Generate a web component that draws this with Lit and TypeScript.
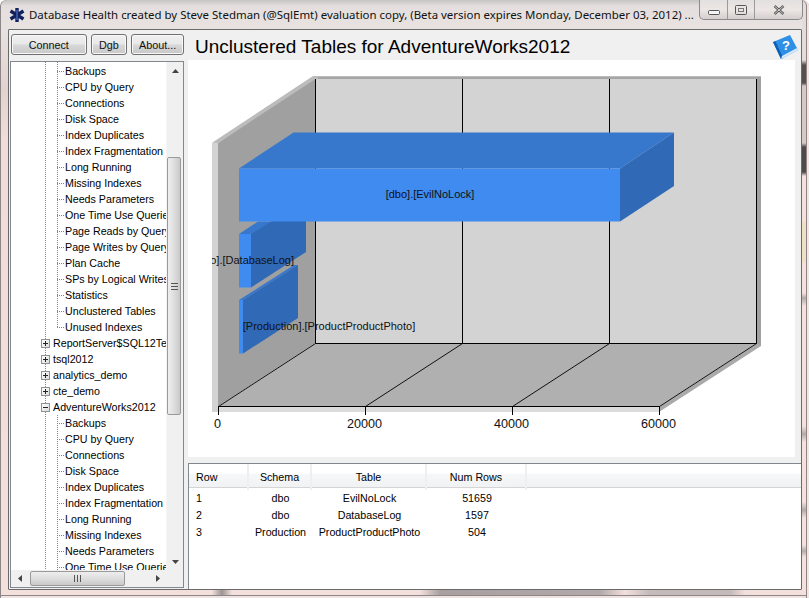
import { LitElement, html, css, svg } from 'lit';
import { customElement } from 'lit/decorators.js';

const REPORTS = [
  'Backups', 'CPU by Query', 'Connections', 'Disk Space', 'Index Duplicates',
  'Index Fragmentation', 'Long Running', 'Missing Indexes', 'Needs Parameters',
  'One Time Use Queries', 'Page Reads by Query', 'Page Writes by Query', 'Plan Cache',
  'SPs by Logical Writes', 'Statistics', 'Unclustered Tables', 'Unused Indexes',
];

const DATABASES = [
  { name: 'ReportServer$SQL12TempDB', open: false },
  { name: 'tsql2012', open: false },
  { name: 'analytics_demo', open: false },
  { name: 'cte_demo', open: false },
  { name: 'AdventureWorks2012', open: true },
];

const ROWS = [
  ['1', 'dbo', 'EvilNoLock', '51659'],
  ['2', 'dbo', 'DatabaseLog', '1597'],
  ['3', 'Production', 'ProductProductPhoto', '504'],
];

// the tree is cut off after "One Time Use Queries" in the second group
const SECOND_GROUP = REPORTS.slice(0, 10);

@customElement('app-root')
export class AppRoot extends LitElement {
  static styles = css`
    :host {
      display: block;
      width: 809px;
      height: 598px;
      overflow: hidden;
      font-family: 'Liberation Sans', Arial, sans-serif;
      font-size: 10.7px;
      color: #000;
    }
    .window {
      width: 809px;
      height: 598px;
      box-sizing: border-box;
      padding: 0 7px 8px 8px;
      display: flex;
      flex-direction: column;
      border-radius: 6px 6px 0 0;
      box-shadow: inset 1px 0 #8c8688, inset -2px 0 #f6e4e0, inset -3px 0 #8c8688, inset 0 -2px #f0e4e2, inset 0 -3px #8c8688;
      /* blurred glass showing through the frame */
      background:
        linear-gradient(
            #e4dcda 0, #e4dcda 60px, #57504e 65px, #57504e 83px, #d8c8c4 86px, #d8c8c4 143px, #4f4a4a 147px, #4f4a4a 172px,
            #f5e0dc 176px, #f5e0dc 220px, #eee0c0 224px, #eee0c0 260px, #f5e0dc 264px, #f5e0dc 293px,
            #b5a9a8 298px, #f5e0dc 306px, #f5e0dc 426px, #b5a9a8 434px, #f5e0dc 442px, #f5e0dc 502px,
            #b5a9a8 510px, #f5e0dc 518px, #f5e0dc 545px, #b5a9a8 551px, #f5e0dc 557px
          )
          right top / 7px 100% no-repeat,
        linear-gradient(
            90deg, #f3dfdc 0, #f3dfdc 212px, #9c9494 222px, #f3dfdc 232px, #f3dfdc 420px, #a8a0a0 440px,
            #b2aaaa 600px, #f3dfdc 625px, #c4baba 650px, #c4baba 730px, #f3dfdc 745px
          )
          left bottom / 100% 8px no-repeat,
        linear-gradient(#c8c3c3 0, #e4dfde 6px, #e8e2e0 29px, #e2d2ce 90px, #f0ddd9 140px, #f3dfdc 100%);
    }
    .titlebar {
      height: 29px;
      flex: none;
      display: flex;
      align-items: flex-start;
      margin-right: -1px;
    }
    .app-icon { margin: 8px 4px 0 1px; flex: none; }
    .caption {
      font-family: 'Noto Sans', sans-serif;
      font-size: 11.45px;
      line-height: 16px;
      margin-top: 7px;
      white-space: nowrap;
      color: #111;
      width: 665px;
      flex: none;
    }
    .controls {
      margin-left: 5px;
      display: flex;
      height: 19px;
      border: 1px solid #8a8a8a;
      border-top: none;
      border-radius: 0 0 5px 5px;
      background: linear-gradient(#e4e0e0, #ece6e4 50%, #d4cece);
      flex: none;
    }
    .controls div {
      display: flex;
      align-items: center;
      justify-content: center;
      border-left: 1px solid #9a9a9a;
    }
    .controls div:first-child { border-left: none; width: 27px; padding-top: 6px; box-sizing: border-box; }
    .controls .max { width: 26px; }
    .controls .close { width: 47px; }
    .client {
      flex: 1;
      min-height: 0;
      border: 1px solid #6a6a6a;
      background: #f0f0f0;
      display: flex;
      gap: 4px;
      padding: 0 0 0 1px;
      border-radius: 1px;
    }
    .left {
      width: 174px;
      flex: none;
      display: flex;
      flex-direction: column;
      padding-top: 4px;
      gap: 6px;
      padding-bottom: 1px;
      box-sizing: border-box;
    }
    .buttons { display: flex; gap: 4px; padding-left: 1px; }
    button {
      height: 21px;
      padding: 0;
      font: inherit;
      font-size: 10.8px;
      color: #111;
      border: 1px solid #707070;
      border-radius: 3px;
      background: linear-gradient(#f0f0f0 0, #e8e8e8 48%, #d8d8d8 52%, #c8c8c8 100%);
      box-shadow: inset 0 0 0 1px #f8f8f8;
    }
    .b1 { width: 76px; }
    .b2 { width: 37px; }
    .b3 { width: 53px; }
    .tree {
      flex: 1;
      min-height: 0;
      border: 1px solid #828790;
      background: #fff;
      display: grid;
      grid-template-columns: 1fr 17px;
      grid-template-rows: 1fr 17px;
    }
    .rows {
      overflow: hidden;
      padding-top: 1px;
      min-width: 0;
      position: relative;
    }
    .node {
      height: 16px;
      line-height: 16px;
      white-space: nowrap;
      display: flex;
      align-items: center;
    }
    .leaf { padding-left: 46px; }
    .leaf i {
      width: 7px;
      flex: none;
      height: 0;
      border-top: 1px dotted #888;
    }
    .leaf span { margin-left: 1px; }
    .db { padding-left: 30px; }
    .box {
      width: 9px;
      height: 9px;
      flex: none;
      margin-right: 3px;
      box-sizing: border-box;
      border: 1px solid #919191;
      background: linear-gradient(135deg, #fff, #dcdcdc);
      position: relative;
    }
    .box::before {
      content: '';
      position: absolute;
      left: 1px;
      right: 1px;
      top: 3px;
      height: 1px;
      background: #222;
    }
    .box.plus::after {
      content: '';
      position: absolute;
      top: 1px;
      bottom: 1px;
      left: 3px;
      width: 1px;
      background: #222;
    }
    .guides {
      position: absolute;
      left: 0;
      top: 0;
      pointer-events: none;
    }
    .vbar {
      display: flex;
      flex-direction: column;
      background: #f0f0f0;
      border-left: 1px solid #f4f4f4;
    }
    .hbar {
      display: flex;
      align-items: center;
      background: #f0f0f0;
    }
    .corner { background: #f0f0f0; }
    .arrow {
      flex: none;
      display: flex;
      align-items: center;
      justify-content: center;
      width: 17px;
      height: 17px;
    }
    .vthumb {
      height: 258px;
      width: 14px;
      margin: 78px 0 0 0;
      box-sizing: border-box;
      border: 1px solid #9a9a9a;
      border-radius: 2px;
      background: linear-gradient(90deg, #eee, #dedede 50%, #c9c9c9);
      display: flex;
      align-items: center;
      justify-content: center;
      flex: none;
    }
    .vspace { flex: 1; }
    .hthumb {
      width: 95px;
      height: 15px;
      box-sizing: border-box;
      border: 1px solid #9a9a9a;
      border-radius: 2px;
      background: linear-gradient(#eee, #dedede 50%, #c9c9c9);
      display: flex;
      align-items: center;
      justify-content: center;
      margin-left: 2px;
      flex: none;
    }
    .hspace { flex: 1; }
    .right {
      flex: 1;
      min-width: 0;
      display: flex;
      flex-direction: column;
    }
    .head {
      height: 30px;
      flex: none;
      display: flex;
      align-items: center;
      justify-content: space-between;
      padding: 0 0 0 7px;
    }
    h1 {
      margin: 4px 0 0;
      font-size: 19px;
      font-weight: 400;
      white-space: nowrap;
    }
    .help { margin: 3px 2px 0 0; flex: none; }
    .chart {
      height: 397px;
      flex: none;
      margin-right: 6px;
      background: #fff;
      display: block;
    }
    .grid {
      margin-top: 6px;
      flex: 1;
      min-height: 0;
      background: #fff;
      border-top: 1px solid #828790;
      border-left: 1px solid #828790;
    }
    .cols {
      display: grid;
      grid-template-columns: 60px 63px 115px 100px 1fr;
      align-items: stretch;
    }
    .cols.hdr {
      height: 23px;
      line-height: 26px;
      background: linear-gradient(#fff 0, #fff 40%, #f6f7f9 45%, #f1f2f4 100%);
      border-bottom: 1px solid #d5d5d5;
      margin-bottom: 2px;
    }
    .cols.hdr div { border-right: 2px solid #eeeff1; text-align: center; }
    .cols.hdr div:last-child { border-right: none; }
    .cols.row { height: 17px; line-height: 17px; }
    .cols div { text-align: center; white-space: nowrap; }
    .cols div:first-child { text-align: left; padding-left: 7px; }
  `;

  private guides() {
    // dotted vertical tree guides, drawn over the row list
    return html`<svg class="guides" width="60" height="510">
      <line x1="34.5" y1="0" x2="34.5" y2="510" stroke="#888" stroke-dasharray="1 1"></line>
      <line x1="46.5" y1="0" x2="46.5" y2="265" stroke="#888" stroke-dasharray="1 1"></line>
      <line x1="46.5" y1="353" x2="46.5" y2="510" stroke="#888" stroke-dasharray="1 1"></line>
    </svg>`;
  }

  private tree() {
    return html`
      <div class="tree">
        <div class="rows">
          ${this.guides()}
          ${REPORTS.map((r) => html`<div class="node leaf"><i></i><span>${r}</span></div>`)}
          ${DATABASES.map(
            (d) => html`<div class="node db">
              <span class="box ${d.open ? '' : 'plus'}"></span><span>${d.name}</span>
            </div>`
          )}
          ${SECOND_GROUP.map((r) => html`<div class="node leaf"><i></i><span>${r}</span></div>`)}
        </div>
        <div class="vbar">
          <div class="arrow"><svg width="7" height="4"><path d="M3.5 0 7 4H0z" fill="#444"></path></svg></div>
          <div class="vthumb">
            <svg width="7" height="7"><path d="M0 .5h7M0 3.5h7M0 6.5h7" stroke="#555" fill="none"></path></svg>
          </div>
          <div class="vspace"></div>
          <div class="arrow"><svg width="7" height="4"><path d="M0 0h7L3.5 4z" fill="#444"></path></svg></div>
        </div>
        <div class="hbar">
          <div class="arrow"><svg width="4" height="7"><path d="M4 0v7L0 3.5z" fill="#444"></path></svg></div>
          <div class="hthumb">
            <svg width="7" height="7"><path d="M.5 0v7M3.5 0v7M6.5 0v7" stroke="#555" fill="none"></path></svg>
          </div>
          <div class="hspace"></div>
          <div class="arrow"><svg width="4" height="7"><path d="M0 0v7l4-3.5z" fill="#444"></path></svg></div>
        </div>
        <div class="corner"></div>
      </div>
    `;
  }

  // Chart coordinates are page coordinates minus the panel origin (188, 60)
  private chart() {
    const axis = [
      { x: 30.5, label: '0' },
      { x: 177.5, label: '20000' },
      { x: 324.5, label: '40000' },
      { x: 471.5, label: '60000' },
    ];
    const wall = [127.5, 274.5, 421.5, 568.5];
    const text = 'font-family:"Liberation Sans",Arial,sans-serif';
    return html`<svg class="chart" width="607" height="397" viewBox="0 0 607 397" shape-rendering="crispEdges">
      ${svg`
      <defs><clipPath id="plot"><rect x="24" y="0" width="560" height="397"></rect></clipPath></defs>
      <polygon points="24,82.7 125,16 573,16 573,19 130,19 30,83" fill="#bcbcbc" shape-rendering="auto"></polygon>
      <rect x="130" y="16" width="443" height="3" fill="#a6a6a6"></rect>
      <rect x="125" y="16" width="448" height="1" fill="#bcbcbc"></rect>
      <rect x="569" y="17" width="4" height="269" fill="#a0a0a0"></rect>
      <polygon points="24,352 471,352 573,286 569,283 471,347 30,347" fill="#aaa" shape-rendering="auto"></polygon>
      <rect x="24" y="347" width="447" height="5" fill="#dcdcdc"></rect>
      <rect x="24" y="82.7" width="6" height="269" fill="#d3d3d3"></rect>
      <polygon points="30,346.5 127.5,283 127.5,19 30,83" fill="#a0a0a0" shape-rendering="auto"></polygon>
      <rect x="127.5" y="19" width="441" height="264" fill="#d3d3d3"></rect>
      <polygon points="30.5,346.5 127.5,283 568.5,283 471.5,346.5" fill="#b0b0b0" shape-rendering="auto"></polygon>
      ${wall.map((x) => svg`<line x1=${x} y1="19" x2=${x} y2="283" stroke="#000"></line>`)}
      <line x1="127" y1="283.5" x2="569" y2="283.5" stroke="#000"></line>
      <line x1="30" y1="346.5" x2="472" y2="346.5" stroke="#000"></line>
      ${wall.map(
        (x, i) => svg`<line x1=${axis[i].x} y1="346.5" x2=${x} y2="283.5" stroke="#111" shape-rendering="auto"></line>`
      )}
      ${axis.map(
        (a) => svg`<line x1=${a.x} y1="346" x2=${a.x} y2="355" stroke="#000"></line>
          <text x=${a.x - 1} y="368" text-anchor="middle" font-size="12.6" style=${text} fill="#111">${a.label}</text>`
      )}
      <g shape-rendering="auto">
        <polygon points="51,240 106,205 110,205 55,240" fill="#3878cc"></polygon>
        <polygon points="55,240 110,205 110,258 55,293.5" fill="#3069b6"></polygon>
        <rect x="51" y="240" width="4" height="53.5" fill="#3f8bf0"></rect>
        <polygon points="51,174 70,161.5 118,161.5 63,174" fill="#3878cc"></polygon>
        <polygon points="63,174 118,140 118,192 63,227.5" fill="#3069b6"></polygon>
        <rect x="51" y="174" width="12" height="53.5" fill="#3f8bf0"></rect>
        <polygon points="51,108.5 105.5,72.5 486,72.5 432,108.5" fill="#3878cc"></polygon>
        <polygon points="432,108.5 486,72.5 486,126 432,161.5" fill="#3069b6"></polygon>
        <rect x="51" y="108.5" width="381" height="53" fill="#3f8bf0"></rect>
      </g>
      <g clip-path="url(#plot)" font-size="11" style=${text} fill="#111">
        <text x="242" y="138" text-anchor="middle">[dbo].[EvilNoLock]</text>
        <text x="56.500" y="204" text-anchor="middle">[dbo].[DatabaseLog]</text>
        <text x="141" y="270" text-anchor="middle">[Production].[ProductProductPhoto]</text>
      </g>
      `}
    </svg>`;
  }

  render() {
    return html`
      <div class="window">
        <div class="titlebar">
          <svg class="app-icon" width="16" height="14" viewBox="0 0 16 14">
            <path d="M8 0v14M1.5 3l13 8M14.5 3l-13 8" stroke="#12205e" stroke-width="3.4" fill="none"></path>
            <path d="M8 2v10" stroke="#4a78c8" stroke-width="1.2" fill="none"></path>
          </svg>
          <div class="caption">Database Health created by Steve Stedman (@SqlEmt) evaluation copy, (Beta version expires Monday, December 03, 2012) ...</div>
          <div class="controls">
            <div><svg width="12" height="5"><rect x=".5" y=".5" width="11" height="4" rx="1" fill="#f4f4f4" stroke="#555"></rect></svg></div>
            <div class="max"><svg width="12" height="10"><rect x=".5" y=".5" width="11" height="9" rx="1" fill="none" stroke="#555"></rect><rect x="3.5" y="3.5" width="5" height="3" fill="none" stroke="#777"></rect></svg></div>
            <div class="close"><svg width="12" height="10"><path d="M1.5 1l9 8M10.5 1l-9 8" stroke="#555" stroke-width="2.4" fill="none"></path><path d="M1.5 1l9 8M10.5 1l-9 8" stroke="#eee" stroke-width=".8" fill="none"></path></svg></div>
          </div>
        </div>
        <div class="client">
          <div class="left">
            <div class="buttons">
              <button class="b1">Connect</button>
              <button class="b2">Dgb</button>
              <button class="b3">About...</button>
            </div>
            ${this.tree()}
          </div>
          <div class="right">
            <div class="head">
              <h1>Unclustered Tables for AdventureWorks2012</h1>
              <svg class="help" width="27" height="26" viewBox="0 0 27 26">
                <path d="M1 8 18 1l8 15-17 9z" fill="#2e8fe6"></path>
                <path d="M1 8l8 17 2-1L3.500 7.200z" fill="#0e5fb4"></path>
                <path d="M9 25l17-9-1-2-15 8z" fill="#d6ebfa"></path>
                <text x="10" y="16" font-size="13" font-weight="700" fill="#fff" font-family="Liberation Sans">?</text>
              </svg>
            </div>
            ${this.chart()}
            <div class="grid">
              <div class="cols hdr"><div>Row</div><div>Schema</div><div>Table</div><div>Num Rows</div><div></div></div>
              ${ROWS.map(
                (r) => html`<div class="cols row">${r.map((c) => html`<div>${c}</div>`)}<div></div></div>`
              )}
            </div>
          </div>
        </div>
      </div>
    `;
  }
}
